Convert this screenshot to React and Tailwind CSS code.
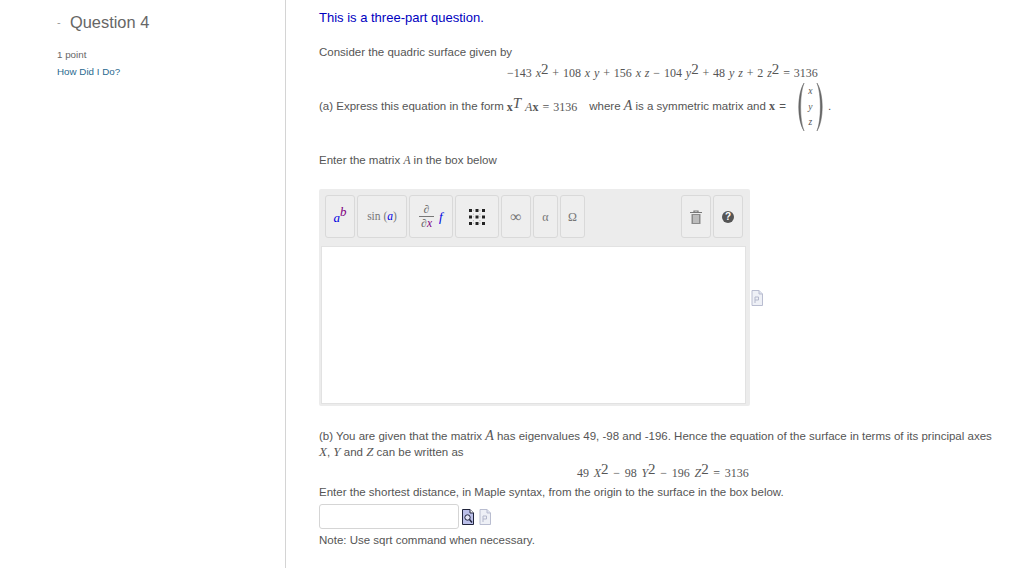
const S = "font-['Liberation_Serif',serif]";
const I = ({ children, cls = "" }) => <i className={`font-['Liberation_Serif',serif] italic leading-[0] ${cls}`}>{children}</i>;
const Sup = ({ children }) => <span className="relative top-[-3px] text-[15px] leading-[0]">{children}</span>;
const Btn = ({ w, children }) => (
  <div className={`${w} h-[43px] shrink-0 rounded-[3px] border border-[#d9d9d9] bg-[#eeeeee] flex items-center justify-center text-[#777] ${S}`}>{children}</div>
);
const DocP = ({ cls = "" }) => (
  <svg width="12" height="16" viewBox="0 0 12 16" className={cls}>
    <path d="M1 .5H8L11.5 4V15.5H1Z" fill="#eef0f6" stroke="#b9bdd0" />
    <path d="M8 .5V4H11.5" fill="#dfe2ee" stroke="#b9bdd0" />
    <path d="M4 13V7H7.5V10H4" fill="none" stroke="#b4b8cc" />
  </svg>
);
const DocQ = () => (
  <svg width="12" height="16" viewBox="0 0 12 16">
    <path d="M.5.5H8L11.5 4V15.5H.5Z" fill="#bcc0ea" stroke="#20243c" />
    <path d="M8 .5V4H11.5" fill="#fff" stroke="#20243c" />
    <circle cx="5.5" cy="8.5" r="2.7" fill="#e4e6f8" stroke="#20243c" />
    <path d="M7.5 10.5L10 13.5" stroke="#20243c" strokeWidth="1.4" />
  </svg>
);
const Matrix = () => (
  <svg width="27" height="50" viewBox="0 0 27 50" className="block">
    <path d="M7 1C0 12 0 38 7 49C2.5 38 2.5 12 7 1Z" fill="#666" stroke="#666" strokeWidth=".5" />
    <path d="M20 1C27 12 27 38 20 49C24.5 38 24.5 12 20 1Z" fill="#666" stroke="#666" strokeWidth=".5" />
  </svg>
);
const Dots = () => {
  const big = [0, 6.5, 13];
  const small = [3.9, 10.4];
  return (
    <svg width="16" height="16" viewBox="0 0 16 16">
      {big.map(x => big.map(y => <rect key={`${x}-${y}`} x={x} y={y} width="3" height="3" fill="#222" />))}
      {small.map(x => [...big, ...small].map(y => <rect key={`s${x}-${y}`} x={x} y={y + 0.8} width="1" height="1" fill="#aaa" />))}
    </svg>
  );
};
export default function App() {
  return (
    <div className="h-[568px] w-[1024px] overflow-hidden bg-white flex font-['Liberation_Sans',sans-serif] text-[11.5px] text-[#555]">
      <aside className="w-[286px] shrink-0 border-r border-[#d4d4d4] pl-[57px] pt-[12px]">
        <div className="flex items-center h-[20px] text-[16.4px] text-[#666]">
          <span className="w-[13px] text-[11px] text-[#999]">-</span>Question 4
        </div>
        <div className="mt-[17px] text-[9.8px] leading-[12px] text-[#666]">1 point</div>
        <div className="mt-[5px] text-[9.8px] leading-[12px] text-[#2a6a8f]">How Did I Do?</div>
      </aside>
      <main className="flex-1 pl-[33px] pt-[9px] min-w-0">
        <div className="text-[13px] leading-[17px] text-[#0000c0]">This is a three-part question.</div>
        <div className="mt-[18px] leading-[16px]">Consider the quadric surface given by</div>
        <div className={`h-[17px] mt-[5px] pl-[188px] text-[12px] leading-[17px] whitespace-nowrap [word-spacing:0.85px] ${S}`}>
          −143 <I>x</I><Sup>2</Sup> + 108 <I>x y</I> + 156 <I>x z</I> − 104 <I>y</I><Sup>2</Sup> + 48 <I>y z</I> + 2 <I>z</I><Sup>2</Sup> = 3136
        </div>
        <div className="flex items-center h-[52px] mt-[-1px] whitespace-nowrap">
          <span>(a) Express this equation in the form </span>
          <span className={`${S} ml-[3px] text-[12px] [word-spacing:1px]`}><b>x</b><Sup><I>T</I></Sup> <I>A</I><b>x</b> = 3136</span>
          <span className="ml-[12px]">where <I cls="text-[14px]">A</I> is a symmetric matrix and <b className={`${S} text-[12px] leading-[0]`}>x</b> <span className="ml-[1px]">=</span></span>
          <span className={`relative ml-[11px] w-[27px] h-[50px] ${S}`}>
            <Matrix />
            <span className="absolute left-0 w-[27px] top-0 h-full flex flex-col items-center justify-between py-[2px] text-[9.5px] leading-[15px] italic">
              <span>x</span><span>y</span><span>z</span>
            </span>
          </span>
          <span className="ml-[4px]">.</span>
        </div>
        <div className="mt-[19px] leading-[16px]">Enter the matrix <I>A</I> in the box below</div>
        <div className="relative mt-[21px] w-[431px] h-[217px] bg-[#ececec] rounded-[2px] pt-[6px] flex flex-col">
          <div className="flex items-start gap-[2px] pl-[6px] pr-[7px] h-[51px]">
            <Btn w="w-[30px]"><span className="text-[13px] text-[#0000e0] italic mt-[3px]">a<sup className="text-[#800080] text-[13px]">b</sup></span></Btn>
            <Btn w="w-[50px]"><span className="text-[11.5px]">sin (<span className="text-[#0000e0] italic">a</span>)</span></Btn>
            <Btn w="w-[44px]">
              <span className="flex flex-col items-center text-[11.5px] leading-[13px] italic text-[#666]">
                <span>∂</span><span className="border-t border-[#777] px-[2px]">∂<span className="text-[#800080]">x</span></span>
              </span>
              <span className="ml-[5px] text-[13px] italic text-[#0000e0]">f</span>
            </Btn>
            <Btn w="w-[44px]"><Dots /></Btn>
            <Btn w="w-[30px]"><span className="text-[16px]">∞</span></Btn>
            <Btn w="w-[25px]"><span className="text-[12px]">α</span></Btn>
            <Btn w="w-[25px]"><span className="text-[12px]">Ω</span></Btn>
            <div className="flex-1" />
            <Btn w="w-[30px]">
              <svg width="12" height="14" viewBox="0 0 12 14" fill="none">
                <path d="M0 2.5H12M4 2V1H8V2" stroke="#777" strokeWidth="1.2" />
                <path d="M1.5 4H10.5V14H1.5Z" fill="#8a8a8a" />
                <path d="M4 5V13M6 5V13M8 5V13" stroke="#eee" />
              </svg>
            </Btn>
            <Btn w="w-[30px]">
              <span className="w-[12px] h-[12px] rounded-full bg-[#555] text-white text-[10px] leading-[12px] font-bold text-center font-['Liberation_Sans',sans-serif]">?</span>
            </Btn>
          </div>
          <div className="ml-[2px] h-[158px] w-[425px] bg-white border border-[#e2e2e2]" />
          <DocP cls="absolute left-[432px] top-[101px]" />
        </div>
        <div className="mt-[22px] leading-[16px] whitespace-nowrap">
          (b) You are given that the matrix <I cls="text-[14px]">A</I> has eigenvalues 49, -98 and -196. Hence the equation of the surface in terms of its principal axes
        </div>
        <div className="leading-[16px]"><I cls="text-[13px]">X</I>, <I cls="text-[13px]">Y</I> and <I cls="text-[13px]">Z</I> can be written as</div>
        <div className={`h-[17px] mt-[5px] pl-[258px] text-[12px] leading-[17px] whitespace-nowrap [word-spacing:1.7px] ${S}`}>
          49 <I>X</I><Sup>2</Sup> − 98 <I>Y</I><Sup>2</Sup> − 196 <I>Z</I><Sup>2</Sup> = 3136
        </div>
        <div className="mt-[2px] leading-[16px]">Enter the shortest distance, in Maple syntax, from the origin to the surface in the box below.</div>
        <div className="mt-[4px] flex items-center h-[25px]">
          <div className="w-[140px] h-[25px] rounded-[3px] border border-[#d5d5d5] bg-white" />
          <span className="ml-[3px] flex gap-[5px]"><DocQ /><DocP /></span>
        </div>
        <div className="mt-[3px] leading-[16px]">Note: Use sqrt command when necessary.</div>
      </main>
    </div>
  );
}
